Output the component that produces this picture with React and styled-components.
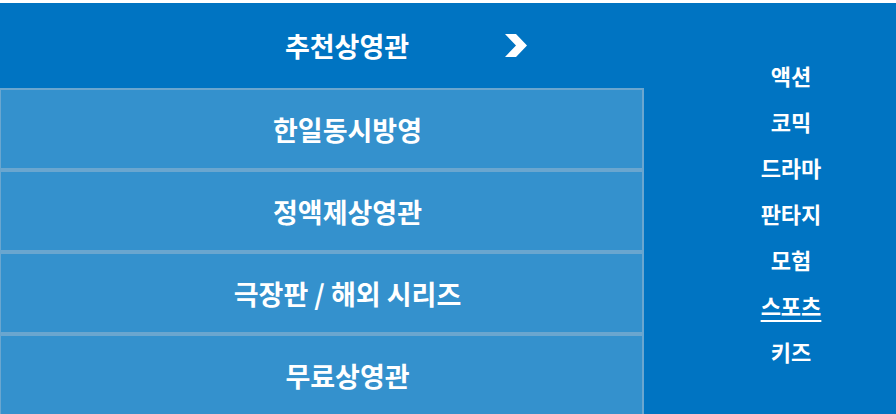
import styled, { createGlobalStyle } from "styled-components";

const GlobalStyle = createGlobalStyle`
  body {
    margin: 0;
    background: #ffffff;
    font-family: "Noto Sans CJK KR", "Noto Sans", sans-serif;
  }
`;

const categories = ["한일동시방영", "정액제상영관", "극장판 / 해외 시리즈", "무료상영관"];
const genres = ["액션", "코믹", "드라마", "판타지", "모험", "스포츠", "키즈"];

const App = () => {
  return (
    <>
      <GlobalStyle />
      <Page>
        <Main>
          <Header>
            <Title>추천상영관</Title>
            <Chevron viewBox="0 0 22 23">
              <polygon points="0,0 11,0 22,11.5 11,23 0,23 11,11.5" fill="#ffffff" />
            </Chevron>
          </Header>
          {categories.map((c) => (
            <Box key={c}>{c}</Box>
          ))}
        </Main>
        <Side>
          {genres.map((g) => (
            <Genre key={g} $active={g === "스포츠"}>
              {g}
            </Genre>
          ))}
        </Side>
      </Page>
    </>
  );
};

//styled components
const Page = styled.div`
  margin-top: 3px;
  height: 411px;
  display: grid;
  grid-template-columns: 644px 1fr;
  background: #0074c2;
  overflow: hidden;
`;
const Main = styled.div`
  display: flex;
  flex-direction: column;
`;
const Header = styled.div`
  height: 85px;
  display: flex;
  align-items: center;
  justify-content: center;
  padding-left: 50px;
  box-sizing: border-box;
`;
const Title = styled.div`
  color: #ffffff;
  font-size: 27px;
  font-weight: 700;
`;
const Chevron = styled.svg`
  width: 22px;
  height: 23px;
  margin-left: 96px;
  margin-right: -118px;
`;
const Box = styled.div`
  flex: 0 0 82px;
  box-sizing: border-box;
  margin-left: -1px;
  border: 2px solid #6aa6cf;
  background: #3491cd;
  display: flex;
  align-items: center;
  justify-content: center;
  padding-left: 52px;
  color: #ffffff;
  font-size: 27px;
  font-weight: 700;
`;
const Side = styled.div`
  display: flex;
  flex-direction: column;
  align-items: center;
  padding: 49px 0 0 42px;
`;
const Genre = styled.a`
  height: 46px;
  line-height: 46px;
  color: #ffffff;
  font-size: 22px;
  font-weight: 700;
  text-decoration: ${(p) => (p.$active ? "underline" : "none")};
  text-underline-offset: 5px;
  text-decoration-thickness: 2px;
  cursor: pointer;
`;

export default App;
